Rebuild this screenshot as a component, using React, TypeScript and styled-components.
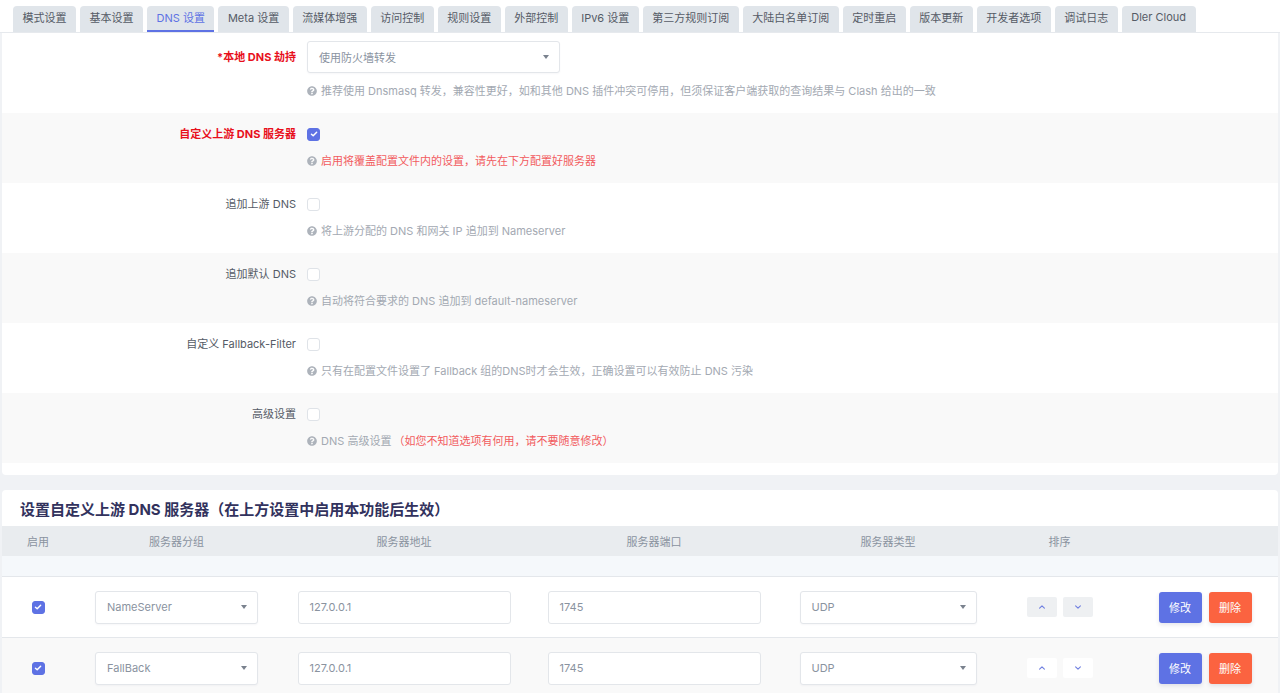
import React from "react";
import styled, { createGlobalStyle } from "styled-components";
import { FaQuestionCircle } from "react-icons/fa";

const Global = createGlobalStyle`
  html, body { margin: 0; padding: 0; }
  body {
    background: #f0f2f5;
    font-family: Inter, "Noto Sans CJK SC", "Noto Sans", sans-serif;
    font-size: 11px;
    color: #525863;
  }
  * { box-sizing: border-box; }
`;

const Page = styled.div`
  width: 1280px;
  height: 693px;
  overflow: hidden;
  display: flex;
  flex-direction: column;
  gap: 15px;
`;

const TopCard = styled.div`
  background: #fff;
  margin: 0 2px;
  border-radius: 0 0 4px 4px;
  padding-bottom: 12px;
`;

const TabBar = styled.div`
  display: flex;
  gap: 4px;
  padding: 6px 0 0 13px;
  margin: 0 -2px;
  background: #fff;
  border-bottom: 1px solid #e6e9ed;
  height: 33px;
`;

const Tab = styled.div<{ $active?: boolean }>`
  display: flex;
  align-items: center;
  padding: 0 9.5px;
  height: 26px;
  background: #e0e5ea;
  border-radius: 4px 4px 0 0;
  color: ${(p) => (p.$active ? "#5e72e4" : "#555b66")};
  border-bottom: 2px solid ${(p) => (p.$active ? "#5e72e4" : "transparent")};
  padding-bottom: 2px;
  white-space: nowrap;
`;

const Row = styled.div<{ $alt?: boolean; $h: number }>`
  display: grid;
  grid-template-columns: 294px 1fr;
  column-gap: 11px;
  align-content: start;
  height: ${(p) => p.$h}px;
  padding-top: 8px;
  background: ${(p) => (p.$alt ? "#f9f9f9" : "#fff")};
`;

const Label = styled.div<{ $red?: boolean; $lh: number }>`
  text-align: right;
  line-height: ${(p) => p.$lh}px;
  color: ${(p) => (p.$red ? "#e8101c" : "#555b66")};
  font-weight: ${(p) => (p.$red ? 700 : 400)};
`;

const Field = styled.div`
  display: flex;
  flex-direction: column;
`;

const ControlLine = styled.div<{ $lh: number }>`
  height: ${(p) => p.$lh}px;
  display: flex;
  align-items: center;
`;

const Help = styled.div<{ $mt: number }>`
  margin-top: ${(p) => p.$mt}px;
  line-height: 16px;
  color: #a3a9b2;
  display: flex;
  align-items: center;
  gap: 4px;
  svg { width: 10px; height: 10px; color: #adb3bb; }
`;

const Warn = styled.span`
  color: #f25b5e;
`;

const WarnParen = styled(Warn)`
  margin-left: -2px;
`;

const SelectBox = styled.div<{ $w: number; $h?: number }>`
  width: ${(p) => p.$w}px;
  height: ${(p) => p.$h ?? 32}px;
  border: 1px solid #e3e6ea;
  border-radius: 3px;
  background: #fff;
  box-shadow: 0 1px 2px rgba(50, 50, 93, 0.04);
  display: flex;
  align-items: center;
  justify-content: space-between;
  padding: 0 10px 0 11px;
  color: #8a939f;
`;

const Caret = styled.span`
  width: 0;
  height: 0;
  border-left: 3px solid transparent;
  border-right: 3px solid transparent;
  border-top: 4px solid #7a828e;
`;

const InputBox = styled.div<{ $w: number }>`
  width: ${(p) => p.$w}px;
  height: 33px;
  border: 1px solid #e3e6ea;
  border-radius: 3px;
  background: #fff;
  display: flex;
  align-items: center;
  padding: 0 11px;
  color: #8a939f;
`;

const Check = styled.span<{ $on?: boolean }>`
  width: 13px;
  height: 13px;
  border-radius: 3px;
  border: 1px solid ${(p) => (p.$on ? "#5e72e4" : "#dfe3e8")};
  background: ${(p) => (p.$on ? "#5e72e4" : "#fff")};
  display: inline-flex;
  align-items: center;
  justify-content: center;
  svg { width: 8px; height: 8px; }
`;

const TableCard = styled.div`
  background: #fff;
  margin: 0 2px;
  border-radius: 4px 4px 0 0;
  flex: 1;
`;

const Title = styled.div`
  height: 36px;
  display: flex;
  align-items: center;
  padding-left: 18px;
  font-size: 15px;
  font-weight: 700;
  color: #32325d;
`;

const Grid = styled.div<{ $bg: string; $h: number; $border?: boolean }>`
  display: grid;
  grid-template-columns: 72px 205px 250px 250px 218px 125px 1fr;
  align-items: center;
  height: ${(p) => p.$h}px;
  background: ${(p) => p.$bg};
  border-top: ${(p) => (p.$border ? "1px solid #e4e7eb" : "none")};
`;

const HeadCell = styled.div`
  text-align: center;
  color: #8a939f;
`;

const Cell = styled.div`
  display: flex;
  justify-content: center;
  align-items: center;
  gap: 6px;
`;

const SortBtn = styled.span<{ $alt?: boolean }>`
  width: 30px;
  height: 20px;
  border-radius: 2px;
  background: ${(p) => (p.$alt ? "#fff" : "#eef0f2")};
  display: inline-flex;
  align-items: center;
  justify-content: center;
  svg { width: 8px; height: 8px; }
`;

const ActBtn = styled.span<{ $kind: "edit" | "del" }>`
  width: 43px;
  height: 31px;
  border-radius: 3px;
  background: ${(p) => (p.$kind === "edit" ? "#5e72e4" : "#fb6340")};
  color: #fff;
  display: inline-flex;
  align-items: center;
  justify-content: center;
  box-shadow: 0 2px 4px rgba(50, 50, 93, 0.12);
`;

const Actions = styled.div`
  display: flex;
  gap: 7px;
  justify-content: center;
  padding-left: 10px;
`;

const tabs = [
  "模式设置", "基本设置", "DNS 设置", "Meta 设置", "流媒体增强", "访问控制", "规则设置",
  "外部控制", "IPv6 设置", "第三方规则订阅", "大陆白名单订阅", "定时重启", "版本更新",
  "开发者选项", "调试日志", "Dler Cloud",
];

const CheckMark = () => (
  <svg viewBox="0 0 10 10" fill="none">
    <path d="M1.8 5.2 L4 7.3 L8.3 2.8" stroke="#fff" strokeWidth="1.8" strokeLinecap="round" strokeLinejoin="round" />
  </svg>
);

const Chevron = ({ up }: { up?: boolean }) => (
  <svg viewBox="0 0 10 10" fill="none">
    <path d={up ? "M2 6.5 L5 3.5 L8 6.5" : "M2 3.5 L5 6.5 L8 3.5"} stroke="#6f7fe0" strokeWidth="1.4" strokeLinecap="round" strokeLinejoin="round" />
  </svg>
);

const checkRows: { label: string; on?: boolean; red?: boolean; help: React.ReactNode }[] = [
  { label: "自定义上游 DNS 服务器", on: true, red: true, help: <Warn>启用将覆盖配置文件内的设置，请先在下方配置好服务器</Warn> },
  { label: "追加上游 DNS", help: "将上游分配的 DNS 和网关 IP 追加到 Nameserver" },
  { label: "追加默认 DNS", help: "自动将符合要求的 DNS 追加到 default-nameserver" },
  { label: "自定义 Fallback-Filter", help: "只有在配置文件设置了 Fallback 组的DNS时才会生效，正确设置可以有效防止 DNS 污染" },
  { label: "高级设置", help: <>DNS 高级设置<WarnParen>（如您不知道选项有何用，请不要随意修改）</WarnParen></> },
];

const servers = [
  { group: "NameServer", addr: "127.0.0.1", port: "1745", type: "UDP" },
  { group: "FallBack", addr: "127.0.0.1", port: "1745", type: "UDP" },
];

export default function App() {
  return (
    <Page>
      <Global />
      <TopCard>
        <TabBar>
          {tabs.map((t) => (
            <Tab key={t} $active={t === "DNS 设置"}>{t}</Tab>
          ))}
        </TabBar>
        <Row $h={80}>
          <Label $red $lh={32}>*本地 DNS 劫持</Label>
          <Field>
            <ControlLine $lh={32}>
              <SelectBox $w={253}>使用防火墙转发<Caret /></SelectBox>
            </ControlLine>
            <Help $mt={10}>
              <FaQuestionCircle />
              推荐使用 Dnsmasq 转发，兼容性更好，如和其他 DNS 插件冲突可停用，但须保证客户端获取的查询结果与 Clash 给出的一致
            </Help>
          </Field>
        </Row>
        {checkRows.map((r, i) => (
          <Row key={r.label} $alt={i % 2 === 0} $h={70}>
            <Label $red={r.red} $lh={26}>{r.label}</Label>
            <Field>
              <ControlLine $lh={26}>
                <Check $on={r.on}>{r.on && <CheckMark />}</Check>
              </ControlLine>
              <Help $mt={6}>
                <FaQuestionCircle />
                {r.help}
              </Help>
            </Field>
          </Row>
        ))}
      </TopCard>
      <TableCard>
        <Title>设置自定义上游 DNS 服务器（在上方设置中启用本功能后生效）</Title>
        <Grid $bg="#e9ecef" $h={30}>
          <HeadCell>启用</HeadCell>
          <HeadCell>服务器分组</HeadCell>
          <HeadCell>服务器地址</HeadCell>
          <HeadCell>服务器端口</HeadCell>
          <HeadCell>服务器类型</HeadCell>
          <HeadCell>排序</HeadCell>
          <HeadCell />
        </Grid>
        <Grid $bg="#f5f8fb" $h={20} />
        {servers.map((s, i) => (
          <Grid key={s.group} $bg={i % 2 ? "#f9f9f9" : "#fff"} $h={61} $border>
            <Cell>
              <Check $on><CheckMark /></Check>
            </Cell>
            <Cell>
              <SelectBox $w={163} $h={33}>{s.group}<Caret /></SelectBox>
            </Cell>
            <Cell>
              <InputBox $w={213}>{s.addr}</InputBox>
            </Cell>
            <Cell>
              <InputBox $w={213}>{s.port}</InputBox>
            </Cell>
            <Cell>
              <SelectBox $w={177} $h={33}>{s.type}<Caret /></SelectBox>
            </Cell>
            <Cell>
              <SortBtn $alt={i % 2 === 1}><Chevron up /></SortBtn>
              <SortBtn $alt={i % 2 === 1}><Chevron /></SortBtn>
            </Cell>
            <Actions>
              <ActBtn $kind="edit">修改</ActBtn>
              <ActBtn $kind="del">删除</ActBtn>
            </Actions>
          </Grid>
        ))}
      </TableCard>
    </Page>
  );
}
